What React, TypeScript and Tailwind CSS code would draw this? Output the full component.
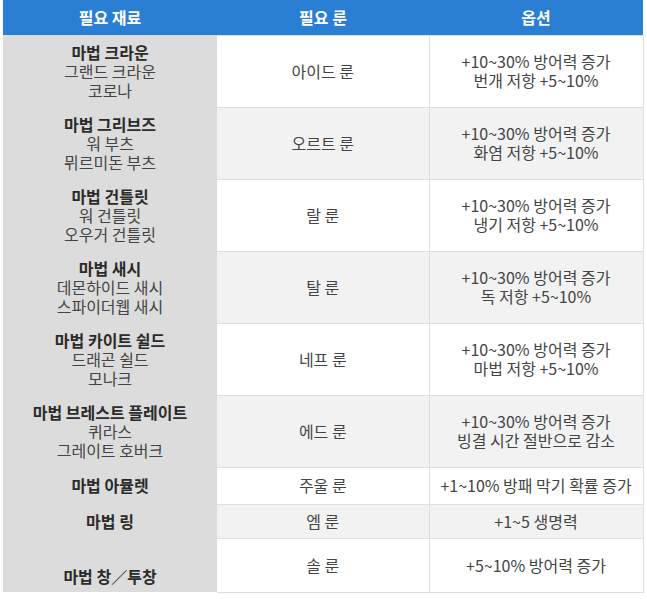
import React from "react";

type Row = {
    items: string[];
    rune: string;
    options: string[];
    h: string;
    gap?: boolean;
};

const rows: Row[] = [
    {items: ["마법 크라운", "그랜드 크라운", "코로나"], rune: "아이드 룬", options: ["+10~30% 방어력 증가", "번개 저항 +5~10%"], h: "h-[72px]"},
    {items: ["마법 그리브즈", "워 부츠", "뮈르미돈 부츠"], rune: "오르트 룬", options: ["+10~30% 방어력 증가", "화염 저항 +5~10%"], h: "h-[72px]"},
    {items: ["마법 건틀릿", "워 건틀릿", "오우거 건틀릿"], rune: "랄 룬", options: ["+10~30% 방어력 증가", "냉기 저항 +5~10%"], h: "h-[72px]"},
    {items: ["마법 새시", "데몬하이드 새시", "스파이더웹 새시"], rune: "탈 룬", options: ["+10~30% 방어력 증가", "독 저항 +5~10%"], h: "h-[72px]"},
    {items: ["마법 카이트 쉴드", "드래곤 쉴드", "모나크"], rune: "네프 룬", options: ["+10~30% 방어력 증가", "마법 저항 +5~10%"], h: "h-[72px]"},
    {items: ["마법 브레스트 플레이트", "퀴라스", "그레이트 호버크"], rune: "에드 룬", options: ["+10~30% 방어력 증가", "빙결 시간 절반으로 감소"], h: "h-[72px]"},
    {items: ["마법 아뮬렛"], rune: "주울 룬", options: ["+1~10% 방패 막기 확률 증가"], h: "h-[37px]"},
    {items: ["마법 링"], rune: "엠 룬", options: ["+1~5 생명력"], h: "h-[34px]"},
    {items: ["마법 창／투창"], rune: "솔 룬", options: ["+5~10% 방어력 증가"], h: "h-[54px]", gap: true},
];

export default function App() {
    return (
        <div className="w-[647px] h-[599px] bg-white pl-[3px] font-['Noto_Sans_CJK_KR','Noto_Sans',sans-serif] text-[16px] leading-[19px] text-[#333]">
            <table className="w-[640px] border-collapse table-fixed text-center">
                <colgroup>
                    <col className="w-[214px]"/>
                    <col className="w-[212px]"/>
                    <col className="w-[214px]"/>
                </colgroup>
                <thead>
                <tr className="h-[35px] bg-[#2a7ed3] text-white font-bold">
                    <th>필요 재료</th>
                    <th>필요 룬</th>
                    <th>옵션</th>
                </tr>
                </thead>
                <tbody>
                {rows.map((row, i) => (
                    <tr key={row.rune} className={row.h}>
                        <td className="bg-[#dcdcdc] align-middle">
                            {row.gap && <div className="h-[22px]"/>}
                            {row.items.map((t, j) => (
                                <div key={t} className={j === 0 ? "font-bold text-[#2b2b2b]" : "text-[#444]"}>
                                    {t}
                                </div>
                            ))}
                        </td>
                        <td className={`border border-[#dedede] border-l-0 text-[#444] ${i % 2 ? "bg-[#f2f2f2]" : "bg-white"}`}>
                            {row.rune}
                        </td>
                        <td className={`border border-[#dedede] text-[#444] ${i % 2 ? "bg-[#f2f2f2]" : "bg-white"}`}>
                            {row.options.map((o) => (
                                <div key={o}>{o}</div>
                            ))}
                        </td>
                    </tr>
                ))}
                </tbody>
            </table>
        </div>
    );
}
